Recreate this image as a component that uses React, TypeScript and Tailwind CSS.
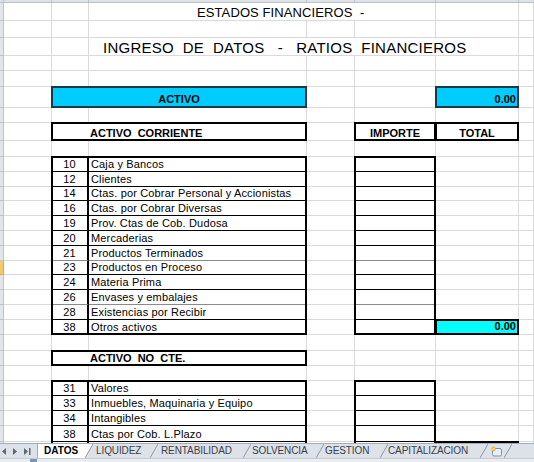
import React from "react";

const RS = [
  "",
  "row-start-1", "row-start-2", "row-start-3", "row-start-4", "row-start-5",
  "row-start-6", "row-start-7", "row-start-8", "row-start-9", "row-start-10",
  "row-start-11", "row-start-12", "row-start-13", "row-start-14", "row-start-15",
  "row-start-16", "row-start-17", "row-start-18", "row-start-19", "row-start-20",
  "row-start-21", "row-start-22", "row-start-23", "row-start-24", "row-start-25",
  "row-start-26", "row-start-27", "row-start-28", "row-start-29",
];
const CS = [
  "",
  "col-start-1", "col-start-2", "col-start-3", "col-start-4",
  "col-start-5", "col-start-6", "col-start-7", "col-start-8",
];

const T1: [string, string][] = [
  ["10", "Caja y Bancos"],
  ["12", "Clientes"],
  ["14", "Ctas. por Cobrar Personal y Accionistas"],
  ["16", "Ctas. por Cobrar Diversas"],
  ["19", "Prov. Ctas de Cob. Dudosa"],
  ["20", "Mercaderias"],
  ["21", "Productos Terminados"],
  ["23", "Productos en Proceso"],
  ["24", "Materia Prima"],
  ["26", "Envases y embalajes"],
  ["28", "Existencias por Recibir"],
  ["38", "Otros activos"],
];
const T2: [string, string][] = [
  ["31", "Valores"],
  ["33", "Inmuebles, Maquinaria y Equipo"],
  ["34", "Intangibles"],
  ["38", "Ctas por Cob. L.Plazo"],
  ["", ""],
];

function DataRows({ start, rows, grayAt }: { start: number; rows: [string, string][]; grayAt: number[] }) {
  return (
    <>
      {rows.map(([n, t], i) => {
        const r = start + i;
        const gray = grayAt.includes(i);
        return (
          <React.Fragment key={r}>
            <div
              className={`${RS[r]} col-start-3 bg-white border-r-2 border-b border-black ${gray ? "border-b-[#8a8a8a]" : ""} flex items-end justify-center pb-px leading-none tracking-[0.15px]`}
            >
              {n}
            </div>
            <div
              className={`${RS[r]} col-start-4 bg-white border-b border-black ${gray ? "border-b-[#8a8a8a]" : ""} flex items-end pl-[2px] pb-px leading-none whitespace-nowrap tracking-[0.15px]`}
            >
              {t}
            </div>
            <div className={`${RS[r]} col-start-6 bg-white border-b border-black ${gray ? "border-b-[#8a8a8a]" : ""}`} />
          </React.Fragment>
        );
      })}
    </>
  );
}

function Sheet() {
  const cells: React.ReactNode[] = [];
  for (let r = 1; r <= 29; r++) {
    for (let c = 1; c <= 8; c++) {
      let cls = "bg-white border-r border-b border-[#dadada]";
      if (c === 1) {
        cls = r === 17
          ? "bg-[#f7c96a] border-r border-b border-[#d9a94a]"
          : "bg-[#e2e6eb] border-r border-b border-[#bcc5cf]";
      }
      cells.push(<div key={`${r}-${c}`} className={`${RS[r]} ${CS[c]} ${cls}`} />);
    }
  }
  return (
    <div className="h-[443px] overflow-hidden">
      <div className="flex h-[3px]">
        <div className="w-[4px] bg-[#dfe3e8] border-r border-b border-[#b9c2cc]" />
        <div className="w-[48px] bg-[#dfe3e8] border-r border-b border-[#b9c2cc]" />
        <div className="w-[37px] bg-[#dfe3e8] border-r border-b border-[#b9c2cc]" />
        <div className="w-[218px] bg-[#dfe3e8] border-r border-b border-[#b9c2cc]" />
        <div className="w-[48px] bg-[#dfe3e8] border-r border-b border-[#b9c2cc]" />
        <div className="w-[81px] bg-[#dfe3e8] border-r border-b border-[#b9c2cc]" />
        <div className="w-[83px] bg-[#dfe3e8] border-r border-b border-[#b9c2cc]" />
        <div className="w-[15px] bg-[#dfe3e8] border-b border-[#b9c2cc]" />
      </div>
      <div className="grid grid-cols-[4px_48px_37px_218px_48px_81px_83px_15px] grid-rows-[18px_17px_18px_15px_16px_21px_15px_18px_16px_15px_15px_14px_15px_15px_15px_15px_14px_15px_15px_15px_15px_16px_15px_15px_15px_15px_15px_16px_15px] text-[11px] text-black">
        {cells}

        {/* titles */}
        <div className="row-start-1 col-start-4 col-end-7 bg-white border-r border-b border-[#dadada] flex items-end pl-[108px] pb-px text-[13px] leading-none whitespace-pre tracking-[0.1px]">
          ESTADOS FINANCIEROS  -
        </div>
        <div className="row-start-3 col-start-4 col-end-8 bg-white border-r border-b border-[#dadada] flex items-end pl-[14px] text-[15px] leading-none whitespace-pre tracking-[0.25px]">
          INGRESO  DE  DATOS   -   RATIOS  FINANCIEROS
        </div>

        {/* ACTIVO */}
        <div className="row-start-6 col-start-3 col-end-5 -ml-px -mt-px border-2 border-[#1d3944] bg-[#00ccff] flex items-end justify-center pb-px font-bold leading-none">
          ACTIVO
        </div>
        <div className="row-start-6 col-start-7 -ml-px -mt-px border-2 border-[#1d3944] bg-[#00ccff] flex items-end justify-end pr-px pb-px font-bold leading-none">
          0.00
        </div>

        {/* ACTIVO CORRIENTE headers */}
        <div className="row-start-8 col-start-3 col-end-5 -ml-px -mt-px border-2 border-black bg-white flex items-end pl-[37px] font-bold leading-none whitespace-pre">
          ACTIVO  CORRIENTE
        </div>
        <div className="row-start-8 col-start-6 -ml-px -mt-px border-2 border-black bg-white flex items-end justify-center font-bold leading-none">
          IMPORTE
        </div>
        <div className="row-start-8 col-start-7 -ml-px -mt-px border-2 border-black bg-white flex items-end justify-center font-bold leading-none">
          TOTAL
        </div>

        <DataRows start={10} rows={T1} grayAt={[6, 9]} />
        <div className="row-start-10 row-end-22 col-start-3 col-end-5 -ml-px -mt-px border-2 border-black" />
        <div className="row-start-10 row-end-22 col-start-6 -ml-px -mt-px border-2 border-black" />
        <div className="row-start-21 col-start-7 -ml-px -mt-px border-2 border-black bg-[#00ffff] flex items-end justify-end pr-px pb-px font-bold leading-none">
          0.00
        </div>

        {/* ACTIVO NO CTE */}
        <div className="row-start-23 col-start-3 col-end-5 -ml-px -mt-px border-2 border-black bg-white flex items-end pl-[37px] font-bold leading-none whitespace-pre">
          ACTIVO  NO  CTE.
        </div>

        <DataRows start={25} rows={T2} grayAt={[]} />
        <div className="row-start-25 row-end-30 col-start-3 col-end-5 -ml-px -mt-px border-2 border-black" />
        <div className="row-start-25 row-end-30 col-start-6 -ml-px -mt-px border-2 border-black" />
        <div className="row-start-29 col-start-7 -ml-px -mt-px border-2 border-black bg-[#00ffff]" />
      </div>
    </div>
  );
}

function Slash({ active = false }: { active?: boolean }) {
  return (
    <svg width="8" height="14" viewBox="0 0 8 14" className="shrink-0">
      {active && <polygon points="0,0 8,0 0,14" fill="#ffffff" />}
      <line x1="0" y1="14" x2="8" y2="0" stroke="#8e99a6" strokeWidth="1" />
    </svg>
  );
}

function Tabs() {
  return (
    <div className="flex h-[15px] bg-[#dde2e8] border-t border-[#a3adb8] text-[10px] leading-none text-[#3a414a] tracking-[-0.1px]">
      <div className="w-[37px] flex items-center gap-[7px] pl-[2px]">
        <svg width="4" height="7" viewBox="0 0 4 7"><path d="M4 0 L0 3.5 L4 7Z" fill="#5e6976" /></svg>
        <svg width="4" height="7" viewBox="0 0 4 7"><path d="M0 0 L4 3.5 L0 7Z" fill="#5e6976" /></svg>
        <svg width="7" height="7" viewBox="0 0 7 7"><path d="M0 0 L4 3.5 L0 7Z M5 0 H6.5 V7 H5Z" fill="#5e6976" /></svg>
      </div>
      <div className="w-[48px] bg-white border-l border-[#a3adb8] flex items-center pl-[6px] font-bold text-black tracking-normal">
        DATOS
      </div>
      <Slash active />
      <div className="w-[57px] flex items-center pl-[3px]">LIQUIDEZ</div>
      <Slash />
      <div className="w-[85px] flex items-center pl-[3px]">RENTABILIDAD</div>
      <Slash />
      <div className="w-[65px] flex items-center pl-[1px]">SOLVENCIA</div>
      <Slash />
      <div className="w-[56px] flex items-center pl-[1px]">GESTION</div>
      <Slash />
      <div className="w-[92px] flex items-center">CAPITALIZACION</div>
      <Slash />
      <div className="w-[16px] flex items-center justify-center">
        <svg width="13" height="11" viewBox="0 0 13 11">
          <rect x="2.5" y="2.5" width="9" height="7.5" rx="1.5" fill="#e9eef5" stroke="#7f93ad" />
          <circle cx="3.5" cy="3" r="2.2" fill="#f2b233" />
          <circle cx="3.5" cy="3" r="1" fill="#fde7a6" />
        </svg>
      </div>
      <Slash />
      <div className="flex-1" />
    </div>
  );
}

export default function App() {
  return (
    <div className="w-[534px] h-[462px] overflow-hidden bg-white font-['Liberation_Sans',Arial,sans-serif]">
      <Sheet />
      <Tabs />
      <div className="h-[4px] bg-[#e9ecf0] border-t border-[#c5ccd4] flex">
        <div className="ml-[30px] w-[7px] h-[3px] bg-[#7b95b8]" />
      </div>
    </div>
  );
}
